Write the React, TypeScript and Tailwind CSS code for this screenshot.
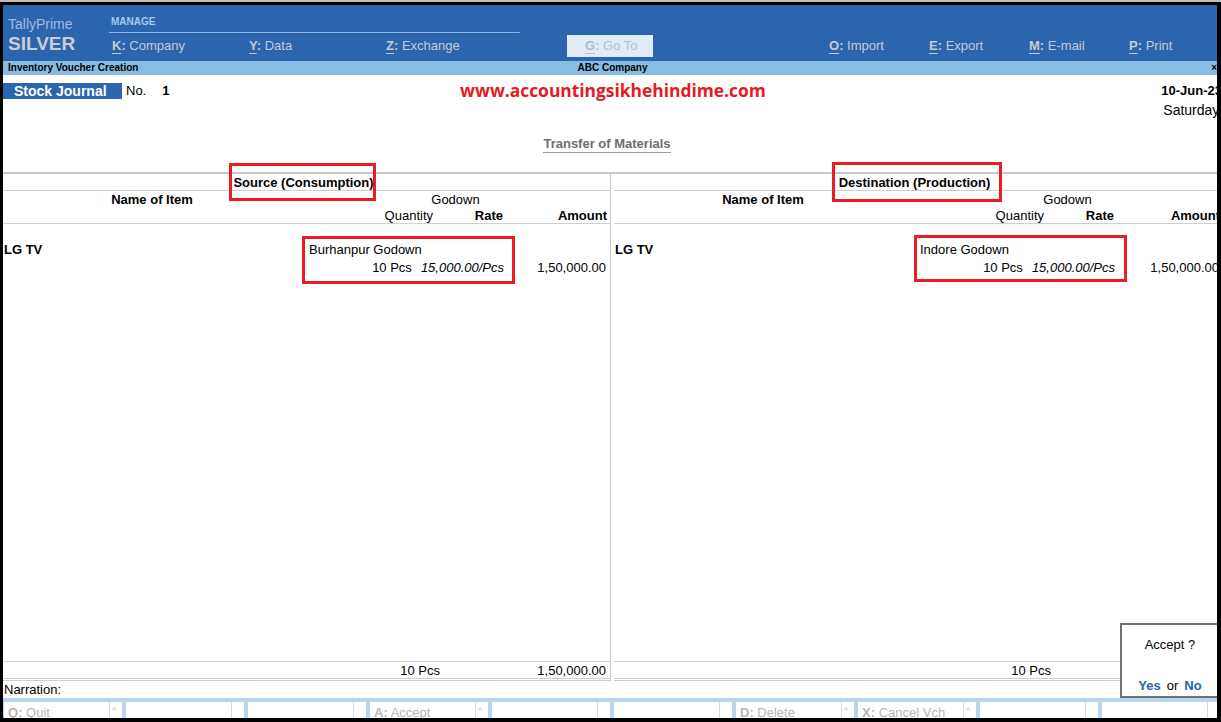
const MANAGE_ITEMS = [
	{ k: 'K', label: 'Company', w: 'w-[137px]' },
	{ k: 'Y', label: 'Data', w: 'w-[137px]' },
	{ k: 'Z', label: 'Exchange', w: 'w-[181px]' }
]

const RIGHT_ITEMS = [
	{ k: 'O', label: 'Import' },
	{ k: 'E', label: 'Export' },
	{ k: 'M', label: 'E-mail' },
	{ k: 'P', label: 'Print' }
]

const FOOTER_KEYS: (readonly [string, string] | null)[] = [
	['Q', 'Quit'],
	null,
	null,
	['A', 'Accept'],
	null,
	null,
	['D', 'Delete'],
	['X', 'Cancel Vch'],
	null,
	null
]

function Key({ k, label }: { k: string; label: string }) {
	return (
		<span className="whitespace-nowrap">
			<span className="font-bold">
				<span className="underline decoration-1 underline-offset-[3px]">{k}</span>:
			</span>{' '}
			{label}
		</span>
	)
}

function TopBar() {
	return (
		<div className="flex h-[56px] shrink-0 bg-[#2a65ae]">
			<div className="w-[106px] shrink-0 pl-[5px] pt-[11px]">
				<div className="text-[14px] leading-[16px] text-[#a3bde0]">TallyPrime</div>
				<div className="mt-[2px] text-[19px] font-bold leading-[20px] text-[#c9cdd6]">SILVER</div>
			</div>
			<div className="flex-1 pt-[11px]">
				<div className="pl-[2px] text-[10px] font-bold leading-[12px] text-[#a6c8ee]">MANAGE</div>
				<div className="mt-[4px] h-px w-[411px] bg-[#8db4e2]" />
				<div className="mt-[2px] flex h-[22px] items-center pl-[3px] text-[13px] leading-[16px] text-[#c5cbd6]">
					{MANAGE_ITEMS.map((item) => (
						<div key={item.k} className={`${item.w} shrink-0`}>
							<Key k={item.k} label={item.label} />
						</div>
					))}
					<div className="flex h-[22px] w-[86px] shrink-0 items-center bg-[#e0edf9] pl-[18px] text-[#b8bdc5]">
						<Key k="G" label="Go To" />
					</div>
					<div className="w-[176px] shrink-0" />
					{RIGHT_ITEMS.map((item) => (
						<div key={item.k} className="w-[100px] shrink-0">
							<Key k={item.k} label={item.label} />
						</div>
					))}
				</div>
			</div>
		</div>
	)
}

function InfoBar() {
	return (
		<div className="flex h-[14px] shrink-0 items-center bg-[#87bce4] text-[10px] font-bold leading-[14px] text-black">
			<div className="flex-1 pl-[5px]">Inventory Voucher Creation</div>
			<div>ABC Company</div>
			<div className="flex-1 text-right">×</div>
		</div>
	)
}

type HalfProps = Readonly<{
	title: string
	godown: string
	right?: boolean
}>

function Half({ title, godown, right }: HalfProps) {
	return (
		<div
			className={
				right
					? 'flex h-[509px] flex-1 flex-col border-l border-t-2 border-[#c8c8c8] pl-[3px]'
					: 'flex h-[509px] w-[607px] shrink-0 flex-col border-t-2 border-[#c8c8c8]'
			}
		>
			<div
				className={
					right
						? 'h-[17px] border-b border-[#cfcfcf] pr-[8px] pt-px text-center font-bold leading-[16px]'
						: 'h-[17px] border-b border-[#cfcfcf] pr-[6px] pt-px text-center font-bold leading-[16px]'
				}
			>
				{title}
			</div>
			<div className="flex h-[33px] border-b border-[#cfcfcf] pt-px leading-[16px]">
				<div className="w-[298px] shrink-0 text-center font-bold">Name of Item</div>
				<div className="flex flex-1 flex-col">
					<div className="text-center">Godown</div>
					<div className="flex">
						<div className="w-[135px] shrink-0 pr-[3px] text-right">Quantity</div>
						<div className="w-[70px] shrink-0 pr-[3px] text-right font-bold">Rate</div>
						<div className="flex-1 pr-[3px] text-right font-bold">Amount</div>
					</div>
				</div>
			</div>
			<div className="flex h-[437px] pt-[17px] leading-[18px]">
				<div className="w-[298px] shrink-0 pl-[1px] font-bold">LG TV</div>
				<div className="flex w-[205px] shrink-0 flex-col">
					<div className="pl-[8px]">{godown}</div>
					<div className="flex justify-end gap-[9px] pr-[2px] whitespace-nowrap">
						<span>10 Pcs</span>
						<span className="italic">15,000.00/Pcs</span>
					</div>
				</div>
				<div className="flex flex-1 flex-col">
					<div className="h-[18px]" />
					<div className="pr-[4px] text-right whitespace-nowrap">1,50,000.00</div>
				</div>
			</div>
			<div className="flex h-[17px] border-t border-[#cfcfcf] pt-px leading-[16px]">
				<div className="w-[437px] shrink-0 text-right">10 Pcs</div>
				{!right && <div className="flex-1 pr-[4px] text-right">1,50,000.00</div>}
			</div>
			<div className="h-[3px] border-y border-[#cfcfcf]" />
		</div>
	)
}

function Voucher() {
	return (
		<div className="flex h-[623px] w-[1220px] shrink-0 flex-col pt-[8px]">
			<div className="grid h-[36px] grid-cols-[1fr_auto_1fr] items-start leading-[16px]">
				<div className="flex items-center">
					<div className="h-[16px] w-[119px] bg-[#2a65ae] pl-[11px] text-[14px] font-bold leading-[16px] text-white">
						Stock Journal
					</div>
					<span className="ml-[4px]">No.</span>
					<span className="ml-[16px] font-bold">1</span>
				</div>
				<div className="font-['Open_Sans',sans-serif] text-[17.4px] font-bold leading-[15px] text-[#e31b23]">
					www.accountingsikhehindime.com
				</div>
				<div className="flex justify-end pr-px">
					<div>
						<div className="font-bold">10-Jun-23</div>
						<div className="mt-[3px] pl-[2px] text-[14px]">Saturday</div>
					</div>
				</div>
			</div>
			<div className="mt-[16px] flex justify-center pr-[12px] pt-px">
				<div className="border-b border-[#9a9a9a] font-bold leading-[16px] text-[#6e6e6e]">
					Transfer of Materials
				</div>
			</div>
			<div className="mt-[19px] flex">
				<Half title="Source (Consumption)" godown="Burhanpur Godown" />
				<Half title="Destination (Production)" godown="Indore Godown" right />
			</div>
			<div className="h-[17px] pl-[1px] leading-[17px]">Narration:</div>
		</div>
	)
}

function Footer() {
	return (
		<div className="flex h-[20px] shrink-0 gap-[4px] bg-[#b7d5ee] pl-[1px] pt-[4px]">
			{FOOTER_KEYS.map((key, i) => (
				<div key={i} className="flex shrink-0">
					<div className="w-[105px] bg-white pl-[4px] pt-[3px] leading-[16px] text-[#b5b5b5]">
						{key && <Key k={key[0]} label={key[1]} />}
					</div>
					<div className="w-px bg-[#dadada]" />
					<div className="w-[12px] bg-white pl-[2px] pt-[3px] text-[9px] leading-[12px] text-[#c4c4c4]">
						{key ? '^' : ''}
					</div>
				</div>
			))}
		</div>
	)
}

function AcceptBox() {
	return (
		<div className="absolute left-[1117px] top-[618px] h-[75px] w-[100px] border-2 border-[#707070] bg-white pt-[12px] text-center leading-[16px]">
			<div>Accept ?</div>
			<div className="mt-[25px] whitespace-nowrap">
				<span className="font-bold text-[#2a62ac]">Yes</span>
				<span className="mx-[6px]">or</span>
				<span className="font-bold text-[#2a62ac]">No</span>
			</div>
		</div>
	)
}

function Annotations() {
	return (
		<>
			<div className="absolute left-[226px] top-[158px] h-[38px] w-[147px] border-[3px] border-[#ed1c24]" />
			<div className="absolute left-[829px] top-[157px] h-[40px] w-[170px] border-[3px] border-[#ed1c24]" />
			<div className="absolute left-[299px] top-[231px] h-[48px] w-[213px] border-[3px] border-[#ed1c24]" />
			<div className="absolute left-[911px] top-[230px] h-[47px] w-[213px] border-[3px] border-[#ed1c24]" />
		</>
	)
}

export default function App() {
	return (
		<div className="h-[722px] w-[1221px] overflow-hidden border-t-2 border-[#bdbdbd] bg-black pl-[3px] pt-[3px] font-['Liberation_Sans',Arial,sans-serif] text-[13px] text-black">
			<div className="relative flex h-[713px] w-[1214px] flex-col overflow-hidden bg-white">
				<TopBar />
				<InfoBar />
				<Voucher />
				<Footer />
				<AcceptBox />
				<Annotations />
			</div>
		</div>
	)
}
